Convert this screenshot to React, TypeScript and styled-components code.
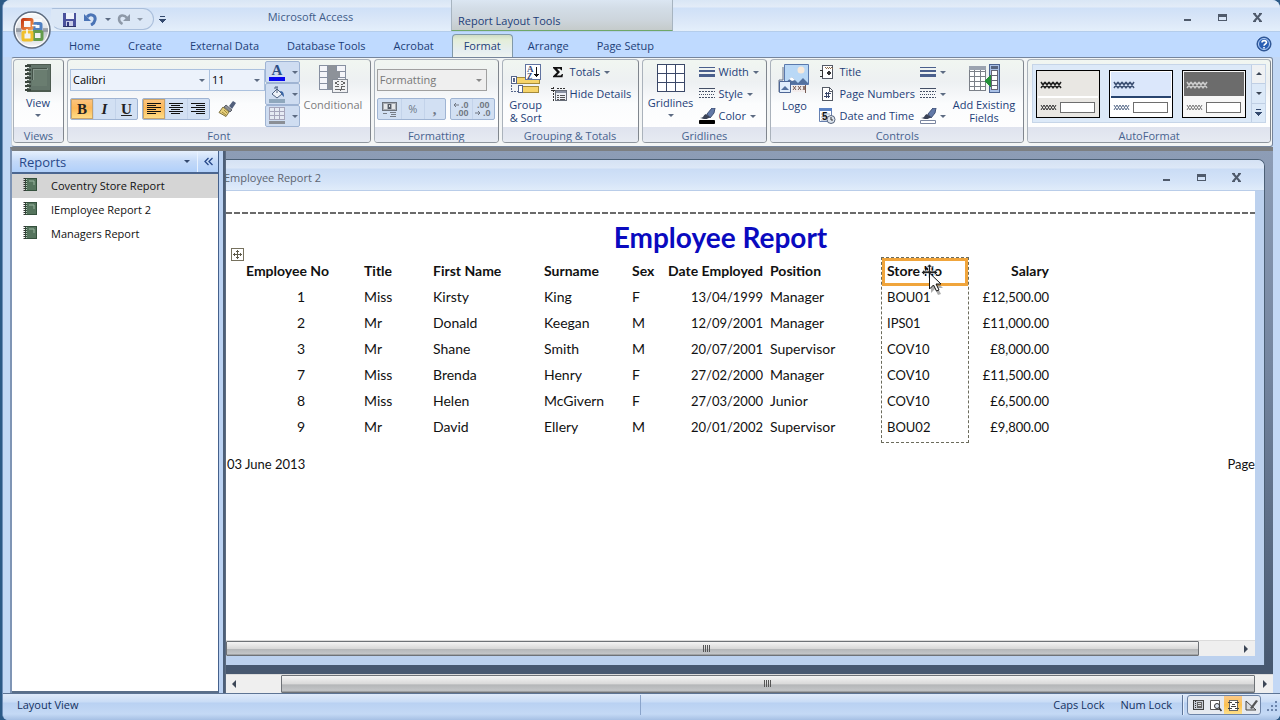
import React from "react";
import styled, { createGlobalStyle, css } from "styled-components";

const Global = createGlobalStyle`
  *, *::before, *::after { box-sizing: border-box; }
  body { margin: 0; background: #2c5a86; font-family: "Open Sans", "Noto Sans", sans-serif; font-size: 11px; line-height: 16px; color: #15428b; }
  button, input, select { font: inherit; color: inherit; margin: 0; padding: 0; border: 0; background: none; border-radius: 0; }
  button { cursor: default; }
  svg { display: block; flex: none; }
`;

const Shell = styled.div`
  display: flex; flex-direction: column; min-height: 100vh; margin-left: 2px; position: relative;
  background: #c3d8f5; border-left: 1px solid #6f8fb8; border-radius: 8px 8px 6px 6px; overflow: hidden;
`;

/* Title bar */
const TitleBar = styled.header`
  display: flex; height: 32px; border-bottom: 1px solid #b4cdec;
  background: linear-gradient(#d9e6f5 0, #e3ecf8 7px, #cfe0f7 8px, #dce8f8 22px, #e4effb 31px);
`;
const TitleStart = styled.div` display: flex; flex: none; width: 448px; padding: 8px 0 0 48px; `;
const QuickBar = styled.div`
  display: flex; align-items: center; gap: 6px; width: 103px; height: 22px; padding-left: 10px;
  border: 1px solid #a9bedb; border-left-color: transparent; border-radius: 2px 11px 11px 10px; background: #dbe7f6;
`;
const BarMore = styled.button` display: flex; align-items: center; width: 16px; height: 22px; padding-left: 5px; `;
const AppTitle = styled.h1` flex: 1; margin: 0; font-size: 11px; line-height: 18px; font-weight: 400; text-align: center; color: #3f5c88; `;
const ContextTitle = styled.div`
  width: 222px; padding: 12px 6px 0; color: #1d3e78; border: 1px solid #a7b4c0; border-width: 0 1px;
  border-bottom: 1px solid #6fa76a; line-height: 18px;
  background: linear-gradient(#dbe6f2 0, #d3dde7 8px, #cdd5dc 20px, #c4cac9 31px);
`;
const WindowButtons = styled.div` display: flex; margin-left: auto; align-items: center; gap: 18px; `;
const MainWindowButtons = styled(WindowButtons)` padding: 4px 14px 0 0; `;
const WinButton = styled.button` width: 17px; height: 17px; display: grid; place-items: center; `;
const OfficeButton = styled.button` position: absolute; left: 10px; top: 11px; width: 38px; height: 38px; z-index: 2; `;

/* Tabs */
const TabStrip = styled.nav` display: flex; height: 25px; padding-left: 52px; background: #bfdaff; `;
const Tab = styled.button<{ $on?: boolean }>`
  height: 25px; padding: 2px 14px 0; color: #1d3e78; white-space: nowrap;
  ${p => p.$on && css`
    background: linear-gradient(#cfdcc4 0, #e4eed9 5px, #e6eef1 16px, #f2f6ef 25px); border: 1px solid #8199a8;
    border-bottom: 0; border-radius: 4px 4px 0 0; padding: 0 11px; margin: 2px 1px 0 4px; height: 23px;
  `}
`;
const HelpButton = styled.button` margin: 3px 7px 0 auto; width: 18px; height: 18px; `;

/* Ribbon */
const Ribbon = styled.section`
  display: flex; gap: 3px; margin: 0 7px 0 8px; padding: 1px 1px 3px; border: 1px solid #75849b; border-left-color: #c5d1df;
  border-radius: 3px; background: #f3f5f5; height: 90px;
`;
const Group = styled.section<{ $w: number }>`
  flex: ${p => p.$w} 1 ${p => p.$w}px; min-width: 0; display: flex; flex-direction: column; overflow: hidden;
  border: 1px solid #aab2bb; border-right-color: #80868e; border-bottom-color: #8e959d; border-radius: 4px;
  background: linear-gradient(#f1f6f1 0, #edf0f2 22px, #fbfcfd 44px, #fff 100%);
`;
const GroupBody = styled.div` display: flex; flex: 1; min-height: 0; `;
const GroupLabel = styled.h2` margin: 0; height: 15px; line-height: 17px; font-size: 11px; font-weight: 400; text-align: center; color: #48638f; background: linear-gradient(#dfe3ee, #e6eaf2); `;
const BigButton = styled.button<{ $w: number; $muted?: boolean }>`
  width: ${p => p.$w}px; display: flex; flex-direction: column; align-items: center; justify-content: flex-start;
  padding-top: 4px; line-height: 13px; color: ${p => (p.$muted ? "#7d7d7d" : "#1d3e78")};
  & > svg:first-child { margin-bottom: 4px; }
`;
const Down = styled.i<{ $c?: string }>`
  flex: none; width: 0; height: 0; border: 3px solid transparent; border-top-color: ${p => p.$c || "#5c6b82"}; border-bottom: 0;
`;
const ArrowGap = styled.span` height: 12px; display: flex; align-items: center; `;
const Stack = styled.div<{ $ml?: number }>` display: flex; flex-direction: column; padding-top: 1px; margin-left: ${p => p.$ml || 0}px; `;
const SmallButton = styled.button` display: flex; align-items: center; gap: 4px; height: 22px; color: #1d3e78; white-space: nowrap; `;
const IconSlot = styled.span` width: 16px; height: 16px; display: grid; place-items: center; flex: none; `;
const ComboRow = styled.div` display: flex; `;
const Combo = styled.label<{ $w: number; $muted?: boolean }>`
  position: relative; width: ${p => p.$w}px; height: 22px; display: flex; align-items: center; border: 1px solid ${p => (p.$muted ? "#a0a0a0" : "#abc1de")};
  background: ${p => (p.$muted ? "#efefef" : "#ecf2fb")}; padding-right: 4px;
  & + & { border-left: 0; }
  select { appearance: none; flex: 1; min-width: 0; padding-left: 2px; color: ${p => (p.$muted ? "#777" : "#000")}; opacity: 1; }
  i { pointer-events: none; }
`;
const ButtonSet = styled.div` display: flex; height: 22px; border: 1px solid #9fb4d3; border-radius: 2px; background: #d2e0f3; overflow: hidden; `;
const SetButton = styled.button<{ $w: number; $on?: boolean; $muted?: boolean }>`
  width: ${p => p.$w}px; display: grid; place-items: center; color: ${p => (p.$muted ? "#707a88" : "#222")};
  & + & { border-left: 1px solid #c3d3ea; }
  ${p => p.$on && css` background: linear-gradient(#fbc583, #fdb757 45%, #fee08a); box-shadow: inset 0 0 0 1px #c9a36a; `}
`;
const Glyph = styled.span<{ $style: "b" | "i" | "u" | "s" }>`
  font-family: "Liberation Serif", serif; font-size: 15px; line-height: 18px; font-weight: 700;
  ${p => p.$style === "i" && "font-style: italic;"}
  ${p => p.$style === "u" && "text-decoration: underline;"}
`;
const Tools = styled.div` display: flex; gap: 4px; margin-top: 7px; align-items: center; `;
const FontColumn = styled.div` padding: 9px 0 0 2px; `;
const ColorStack = styled.div` display: flex; flex-direction: column; padding-top: 1px; width: 35px; `;
const ColorButton = styled.button`
  display: flex; align-items: center; gap: 6px; height: 22px; padding-left: 3px; border: 1px solid #9fb4d3; border-radius: 2px; background: #cfddf1;
`;
const LoneButton = styled.button` width: 26px; height: 22px; display: grid; place-items: center; `;
const Gallery = styled.div` display: flex; flex: 1; margin: 4px; border: 1px solid #c6d5e8; background: #dce9f8; `;
const Styles = styled.div` flex: 1; display: flex; align-items: center; justify-content: space-between; padding: 0 5px 0 3px; `;
const StyleButton = styled.button` width: 64px; height: 48px; `;
const Spinner = styled.div` width: 14px; display: flex; flex-direction: column; border-left: 1px solid #c0cfe4; `;
const SpinButton = styled.button`
  flex: 1; display: grid; place-items: center; & + & { border-top: 1px solid #c0cfe4; } &:first-child { background: #eff1f3; }
`;

/* Work area */
const Main = styled.main` flex: 1; display: flex; margin: 0 7px; border-top: 4px solid #7c7f82; border-left: 2px solid #7f95b5; min-height: 0; `;
const NavPane = styled.aside` flex: none; width: 207px; background: #fff; border-right: 1px solid #45618c; border-bottom: 2px solid #5b6f89; `;
const NavHead = styled.div` display: flex; align-items: center; height: 23px; border-bottom: 2px solid #4b6690; background: linear-gradient(#e6f0fd, #c3d9f8 50%, #b1d0fa); padding-left: 7px; `;
const NavTitle = styled.h2` flex: 1; margin: 0; font-size: 13px; line-height: 18px; font-weight: 400; color: #27488a; `;
const NavToggle = styled.button` width: 21px; height: 21px; display: grid; place-items: center; & + & { border-left: 1px solid #e8f2ff; } `;
const NavList = styled.ul` list-style: none; margin: 0; padding: 0; `;
const NavItem = styled.a<{ $on?: boolean }>`
  display: flex; align-items: center; gap: 14px; height: 24px; padding-left: 11px; color: #111; text-decoration: none;
  background: ${p => (p.$on ? "#d5d5d5" : "transparent")};
  svg { margin-bottom: 3px; }
`;
const Splitter = styled.div` flex: none; width: 6px; background: #bcd3f3; border-right: 2px solid #4d5f78; `;
const Workspace = styled.div` flex: 1; min-width: 0; display: flex; flex-direction: column; border-left: 1px solid #5c6b80; background: linear-gradient(#8d9db6 0, #74859f 40%, #475870 95%); `;
const Child = styled.section`
  flex: 1; display: flex; flex-direction: column; margin: 8px 8px 9px 0; border-top: 1px solid #4c6076; border-right: 1px solid #4c6076;
  border-radius: 0 7px 0 0; background: #bcd1ee; padding: 0 9px 9px 0;
`;
const ChildTitle = styled.div`
  display: flex; height: 31px; margin-right: -9px; padding: 5px 19px 0 0; align-items: center; border-radius: 0 6px 0 0; color: #5d6470; white-space: nowrap;
  background: linear-gradient(#d5e2f4 0, #dde8f7 8px, #cadcf5 9px, #d5e4f8 22px, #e0ecfa 30px);
  border-bottom: 1px solid #b9cde9;
`;
const ChildName = styled.h2` margin: 0 0 0 -2px; font: inherit; `;
const Report = styled.article` position: relative; flex: 1; background: #fff; color: #111; font-family: Lato, "Open Sans", sans-serif; font-size: 13px; line-height: 18px; overflow: hidden; `;
const PageEdge = styled.hr` margin: 21px 0 0; border: 0; height: 2px; background: repeating-linear-gradient(90deg, #6a6a6a 0 6px, transparent 6px 8px); `;
const ReportTitle = styled.h1` margin: 0; padding: 7px 0 0; height: 44px; width: 989px; max-width: 100%; text-align: center; font-size: 28px; line-height: 32px; color: #0a0abf; `;
const DataTable = styled.table` position: relative; border-collapse: collapse; table-layout: fixed; width: 827px; `;
type CellProps = { $right?: boolean; $pad?: number; $figures?: boolean };
const cell = css<CellProps>`
  height: 26px; padding: 0 ${p => (p.$right ? (p.$pad ?? 4) : 0)}px 0 ${p => (p.$right ? 0 : (p.$pad ?? 7))}px;
  text-align: ${p => (p.$right ? "right" : "left")}; white-space: nowrap; font-size: ${p => (p.$figures ? 13 : 14)}px;
`;
const Th = styled.th<CellProps>` ${cell} `;
const Td = styled.td<CellProps>` ${cell} `;
const SelectedTh = styled(Th)`
  position: relative;
  &::before { content: ""; position: absolute; left: 0; top: -1px; width: 88px; height: 186px; border: 1px dashed #6b6b5c; }
  &::after { content: ""; position: absolute; left: 1px; top: 0; width: 86px; height: 28px; border: 3px solid #f0a53c; }
`;
const MoveHandle = styled.button` position: absolute; left: 5px; top: -10px; width: 13px; height: 13px; `;
const Pointer = styled.svg` position: absolute; left: 38px; top: 6px; z-index: 1; `;
const ReportFoot = styled.footer` display: flex; justify-content: space-between; margin-top: 15px; padding-left: 1px; `;

const ScrollTrack = styled.div<{ $h: number }>` display: flex; height: ${p => p.$h}px; background: #efefef; border-top: 1px solid #dcdcdc; `;
const ScrollThumb = styled.div<{ $open?: boolean }>`
  flex: 1; display: grid; place-items: center; border: 1px solid #6e7277; border-radius: 1px; padding-right: ${p => (p.$open ? 12 : 0)}px;
  background: linear-gradient(#f4f4f4, #d9d9d9 50%, #b4b6b8 55%, #c3c5c7 90%, #8c8e90);
`;
const ScrollButton = styled.button<{ $w: number; $inset: number }>` width: ${p => p.$w}px; padding-left: ${p => p.$inset}px; display: flex; align-items: center; `;

/* Status bar */
const Status = styled.footer`
  display: flex; align-items: center; height: 27px; padding: 0 2px 4px 14px; color: #14315f; border-top: 1px solid #5d7494;
  background: linear-gradient(#dfeafa 0, #c9dcf6 8px, #b9d1f2 9px, #c4d9f5 20px, #a6c0e4 26px);
`;
const StatusHalf = styled.div` flex: 1; `;
const StatusEnd = styled.div` flex: none; width: calc(50% + 8px); display: flex; align-items: center; justify-content: flex-end; border-left: 1px solid #8aa4cb; `;
const LockText = styled.span` margin-right: 16px; &:nth-child(2) { margin-right: 10px; } `;
const ViewDivider = styled.span` width: 2px; height: 20px; margin-right: 3px; background: #5f7699; border-right: 1px solid #e3edfb; `;
const ViewSet = styled.div` display: flex; border: 1px solid #6e85a8; border-radius: 3px; background: #e6eaf0; height: 20px; overflow: hidden; margin-right: 1px; `;
const ViewButton = styled.button<{ $on?: boolean }>` width: 18px; display: grid; place-items: center; background: ${p => (p.$on ? "linear-gradient(#fbc98a, #fbc04f 50%, #fde08a)" : "transparent")}; `;

const px = { shapeRendering: "crispEdges" as const };

const MinIcon = () => <svg width="17" height="17" {...px}><path d="M5 10h7v2H5z" fill="#4f5a6b" /></svg>;
const MaxIcon = () => <svg width="17" height="17" {...px}><path d="M4.500 5.500h8v6h-8z" fill="none" stroke="#4f5a6b" /><path d="M4 5h9v3H4z" fill="#4f5a6b" /></svg>;
const CloseIcon = () => <svg width="17" height="17"><path d="M5 4.500l7 8M12 4.500l-7 8" stroke="#4f5a6b" strokeWidth="2" /><path d="M4 4.500h3M10 4.500h3M4 12.500h3M10 12.500h3" stroke="#4f5a6b" /></svg>;

const BookIcon = ({ s }: { s: number }) => (
  <svg width={s} height={s} viewBox="0 0 28 28">
    <rect x="3" y="0" width="24" height="28" fill="#4d5b50" />
    <rect x="4" y="1" width="22" height="25" fill="#63756a" />
    <path d="M8 5h15v17H8z" fill="#6a7d70" />
    <path d="M8 4h16v2H10v10H8z" fill="#86978c" />
    <path d="M8.500 4v12M8 4.500h15" stroke="#45544a" />
    <path d="M1 2h6M1 6h6M1 10h6M1 14h6M1 18h6M1 22h6M1 26h6" stroke="#39443c" strokeWidth="2" />
    <path d="M1 3.500h4M1 7.500h4M1 11.500h4M1 15.500h4M1 19.500h4M1 23.500h4" stroke="#e6eae7" />
  </svg>
);

const SmallBook = () => (
  <svg width="14" height="14" viewBox="0 0 14 14">
    <path d="M2 0h12v13H2z" fill="#35513d" /><path d="M4 1h9v11H4z" fill="#55745d" />
    <path d="M6 3h5v4" fill="none" stroke="#9ab5a0" /><path d="M1.500 0v14" stroke="#333" strokeWidth="2" strokeDasharray="1 1" />
    <path d="M3.500 1v12" stroke="#b8c9bc" strokeDasharray="1 1" />
  </svg>
);

const OfficeLogo = () => (
  <svg width="38" height="38" viewBox="0 0 38 38">
    <defs>
      <linearGradient id="orb" x1="0" y1="0" x2="0" y2="1"><stop offset="0" stopColor="#fbfcfd" /><stop offset=".46" stopColor="#dfe2e7" /><stop offset=".5" stopColor="#b9bfc8" /><stop offset="1" stopColor="#fbfbfc" /></linearGradient>
      <linearGradient id="flame" x1="0" y1="0" x2="1" y2="1"><stop offset="0" stopColor="#c53a14" /><stop offset="1" stopColor="#f0924a" /></linearGradient>
    </defs>
    <circle cx="19" cy="19" r="18" fill="url(#orb)" stroke="#5f6d80" strokeWidth="1.500" />
    <circle cx="19" cy="19" r="16.500" fill="none" stroke="#fff" />
    <path d="M3 17h5v4H3zM30 17h5v4h-5z" fill="#7d838c" opacity=".6" />
    <path d="M9 8h20v22H9z" fill="#fff" opacity=".7" />
    <g fill="none" strokeWidth="3">
      <rect x="21" y="12.500" width="7" height="6" rx="1" stroke="#4f7fc0" />
      <rect x="20.500" y="20.500" width="8.500" height="8" rx="1" stroke="#639b4c" />
      <rect x="10" y="21" width="9" height="8" rx="1" stroke="#f0c02c" />
      <rect x="9.500" y="8.500" width="9.500" height="9" rx="1" stroke="url(#flame)" />
    </g>
    <path d="M19 14.500h5M14 18v5" stroke="#fff" strokeWidth="1.500" />
  </svg>
);

const SaveIcon = () => (
  <svg width="15" height="15" {...px}><path d="M1 1h13v13H1z" fill="#4a519c" /><path d="M4 1h8v6H4z" fill="#eef2fb" /><path d="M4 9h7v5H4z" fill="#c9cde8" /><path d="M5 10h2v4H5z" fill="#343a80" /><path d="M1 14h13v1H1z" fill="#2e3468" /></svg>
);
const UndoIcon = () => (
  <svg width="16" height="14"><path d="M4 5C7 1 13 3 12 8c-.5 2.500-2 4-4 5" fill="none" stroke="#4b74b6" strokeWidth="3" /><path d="M1 2v7h7z" fill="#4b74b6" /></svg>
);
const RedoIcon = () => (
  <svg width="14" height="14"><path d="M10 6C7 2 2 3 2 7c0 2.500 1.500 4 3.500 5" fill="none" stroke="#8e99a8" strokeWidth="2.500" /><path d="M13 2v7H6z" fill="#8e99a8" /></svg>
);
const MoreIcon = () => <svg width="7" height="7" {...px}><path d="M1 0h5v1H1zM0 3h7v1H6v1H5v1H4v1H3V6H2V5H1V4H0z" fill="#33496e" /></svg>;

const HelpIcon = () => (
  <svg width="18" height="18"><circle cx="9" cy="9" r="7" fill="#2b5fb4" stroke="#274b86" /><circle cx="9" cy="9" r="5.500" fill="none" stroke="#b9d2f5" /><path d="M7 7.500c0-2.500 4.500-2.500 4.500 0 0 1.500-2.500 1.500-2.500 3.200M9 12v1.500" fill="none" stroke="#fff" strokeWidth="1.600" /></svg>
);

const AlignIcon = ({ k }: { k: 0 | 1 | 2 }) => (
  <svg width="14" height="12" {...px}>
    {[0, 1, 2, 3, 4, 5].map(i => {
      const w = i % 2 ? 9 : 14;
      return <rect key={i} x={k === 0 ? 0 : k === 1 ? (14 - w) >> 1 : 14 - w} y={i * 2} width={w} height="1" fill="#111" />;
    })}
  </svg>
);

const BrushIcon = () => (
  <svg width="18" height="16"><path d="M11 5l4-5 3 2-4 6z" fill="#52607c" /><path d="M8 4l6 5-2 2-6-5z" fill="#8b8f96" stroke="#5d626b" /><path d="M5 6l6 5-3 4.500-7-4z" fill="#e6cf7a" stroke="#7d7141" /><path d="M4 11l4 3M6 9l3 3" stroke="#a08a3c" /></svg>
);
const FontColorIcon = () => (
  <svg width="17" height="18"><path d="M0 14h16v4H0z" fill="#0909ee" /><text x="8" y="12" fontFamily="Liberation Serif" fontSize="15" fontWeight="700" textAnchor="middle" fill="#2e4f85">A</text></svg>
);
const FillIcon = () => (
  <svg width="17" height="17"><path d="M0 13h16v4H0z" fill="#8fa8bd" /><path d="M3 8l5-5 5 5-5 4z" fill="#eef2f8" stroke="#4d6180" /><path d="M8 1v6M6 3V1h3" stroke="#4d6180" fill="none" /><path d="M11 5c3 0 4 2 4 6-2-1-2-3-3-4z" fill="#3a66a7" /></svg>
);
const LinesIcon = () => (
  <svg width="17" height="18" {...px}><path d="M.5.500h15v12H.5zM.5 4.500h15M.5 8.500h15M5.500.500v12M10.500.500v12" fill="#e6ebf3" stroke="#a6a6bb" /><path d="M0 14h16v3H0z" fill="#8b8f96" /></svg>
);
const ConditionalIcon = () => (
  <svg width="32" height="30" {...px}>
    <path d="M2.500 1.500h26v24h-26zM2.500 7.500h26M2.500 13.500h26M2.500 19.500h26M10.500 1.500v24M19.500 1.500v24" fill="#f4f5f9" stroke="#8790a1" />
    <path d="M11 1h8v6h-8zM19 7h4v6h-4zM11 7h8v6h-8zM11 13h10v6H11zM11 19h5v6h-5z" fill="#8d9299" />
    <path d="M15.500 15.500h15v13h-15z" fill="#f0f1f3" stroke="#858b95" />
    <path d="M22 17l-4 2 4 2M18 22.500h4M24 17l4 2-4 2M24 22.500h4M18 25.500h10M25 23l-2 4" fill="none" stroke="#666" />
  </svg>
);
const CurrencyIcon = () => (
  <svg width="17" height="17" {...px}><path d="M1.500 1.500h14v8h-14z" fill="#a9adb4" stroke="#6d737c" /><path d="M3 3h3v5H3zM11 3h3v5h-3z" fill="#e6e8ea" /><path d="M7 3h3v5H7z" fill="#555c67" /><path d="M8 4h1v2H8z" fill="#ddd" /><path d="M2 12.500h4M9 11.500h6M10 13.500h5M9 15.500h6" stroke="#777d86" /></svg>
);
const DecimalIcon = ({ up }: { up?: boolean }) => (
  <svg width="18" height="16" fill="#707782" fontFamily="Liberation Sans" fontSize="9" fontWeight="700">
    {up ? <><path d="M7 4H2M4 2L2 4l2 2" stroke="#707782" fill="none" /><text x="9" y="7">.0</text><text x="4" y="15">.00</text></>
      : <><text x="3" y="7">.00</text><path d="M1 12h5M4 10l2 2-2 2" stroke="#707782" fill="none" /><text x="9" y="15">.0</text></>}
  </svg>
);
const GroupSortIcon = () => (
  <svg width="32" height="30" {...px}>
    <path d="M1.500 13.500h28v6h-28z" fill="#f6d46a" stroke="#a48a3a" /><path d="M1.500 12.500h5v7h-5z" fill="#fff" stroke="#56658a" /><path d="M3 14h2v4H3z" fill="#56658a" />
    <path d="M8.500 22.500h20v6h-20z" fill="#f6d46a" stroke="#a48a3a" /><path d="M8.500 21.500h4v7h-4z" fill="#fff" stroke="#56658a" /><path d="M1.500 21v6.500h6" fill="none" stroke="#56658a" strokeDasharray="2 1" />
    <path d="M15.500.500h15v15h-15z" fill="#fff" stroke="#6073a0" />
    <text x="17" y="8" fontSize="9" fontFamily="Liberation Serif" fontWeight="700" fill="#34456f">A</text><text x="17" y="15" fontSize="8" fontFamily="Liberation Serif" fontWeight="700" fill="#34456f">Z</text>
    <path d="M26 3h1v10h-1zM24 10h5v1h-1v1h-3v-1h-1z" fill="#111" />
  </svg>
);
const SigmaIcon = () => <svg width="16" height="16"><path d="M3 3h9v3.200h-1L10 4.800H7L10 8l-3.300 3.500h4L12 10h1l-.5 3.300H3v-1L7 8.200 3 4z" fill="#111" /></svg>;
const DetailsIcon = () => (
  <svg width="18" height="16" {...px}><path d="M1 4h4M3 1v14M1 2h2M7 2h9" stroke="#333" strokeDasharray="2 1" /><path d="M5.500 4.500h11v10h-11z" fill="#edf0f5" stroke="#676d78" /><path d="M6 5h10v2H6z" fill="#8a92a3" /><path d="M7 9h2M10 9h5M7 11h2M10 11h5M7 13h2M10 13h5" stroke="#555" /></svg>
);
const GridIcon = () => <svg width="28" height="28" {...px}><path d="M.5.500h27v27H.5zM9.500 0v28M18.500 0v28M0 9.500h28M0 18.500h28" fill="#fff" stroke="#3b4868" /></svg>;
const WidthIcon = () => <svg width="16" height="12" {...px}><path d="M0 1h16v1H0zM0 4h16v2H0zM0 8h16v3H0z" fill="#4a5f8c" /></svg>;
const StyleIcon = () => <svg width="16" height="12" {...px}><path d="M0 .5h16" stroke="#444f66" /><path d="M0 3.500h16M0 9.500h16" stroke="#444f66" strokeDasharray="2 1" /><path d="M0 6.500h16" stroke="#444f66" strokeDasharray="1 1" /></svg>;
const PenIcon = ({ fill }: { fill: string }) => (
  <svg width="17" height="16"><path d="M8 6l5-6h3l-1 5-4 5z" fill="#6279a8" stroke="#3f5076" /><path d="M1 10c4 0 3-3 6-4l4 3c-3 3-6 2-10 1z" fill="#3a4256" /><path d="M.5 12.500h15v3H.5z" fill={fill} stroke={fill === "#fff" ? "#7a86a0" : fill} /></svg>
);
const LogoIcon = () => (
  <svg width="32" height="31"><path d="M6.500.500h24v20h-24z" fill="#b9d8f6" stroke="#5a79ad" /><circle cx="23" cy="6" r="3.500" fill="#f8e9da" /><path d="M7 19l7-6 6 6 5-5 5 5v1H7z" fill="#54719f" /><path d="M11 15l3-2 3 3-3 1z" fill="#fff" />
    <path d="M5 3v13H1v12" stroke="#66728a" fill="none" /><path d="M1.500 17.500h11v11h-11z" fill="#e2eefc" stroke="#4d6695" /><path d="M3 26l4-4 4 4z" fill="#54719f" /><path d="M14 21h14v7H14z" fill="#f3eded" /><path d="M15 22l3 4m0-4l-3 4m5-4l3 4m0-4l-3 4m5-4l2 4m0-4l-2 4M27.500 21v8" stroke="#775a52" /></svg>
);
const TitleIcon = () => <svg width="14" height="15" {...px}><path d="M2.500.500h10v13h-10z" fill="#fff" stroke="#555b66" /><path d="M5 2.500h7M6 3.500h7" stroke="#8c6c48" strokeDasharray="1 1" /><path d="M0 5.500h3M2.500 6v5H0M8 6h1v1h1v1H9v1H8V8H7V7h1z" stroke="#333" fill="none" /></svg>;
const PageIcon = () => <svg width="13" height="15" {...px}><path d="M1.500.500h7l3 3v10h-10z" fill="#fff" stroke="#555b66" /><path d="M8 1v3h3" stroke="#555b66" fill="none" /><path d="M5.500 5v6M7.500 5v6M4 6.500h6M3 9.500h6" stroke="#39466a" /></svg>;
const DateIcon = () => (
  <svg width="17" height="16"><path d="M.5.500h12v13H.5z" fill="#fff" stroke="#6680b0" /><path d="M0 0h13v3H0z" fill="#5b82c4" /><path d="M2 6h9M2 9h9M2 12h9" stroke="#9aa7bf" /><text x="3" y="12" fontSize="10" fontFamily="Liberation Sans" fontWeight="700" fill="#111">5</text><circle cx="12" cy="11.500" r="4" fill="#dce4ee" stroke="#56647c" /><path d="M12 9v3h2" stroke="#333" fill="none" /></svg>
);
const FieldsIcon = () => (
  <svg width="32" height="30" {...px}><path d="M1.500 2.500h16v24h-16zM1.500 7.500h16M1.500 12.500h16M1.500 17.500h16M1.500 22.500h16M6.500 2.500v24M12.500 2.500v24" fill="#fff" stroke="#7b8088" /><path d="M1 2h17v4H1z" fill="#9ba3af" /><path d="M21.500.500h10v28h-10z" fill="#a9c0e6" stroke="#4c6491" /><path d="M23.500 6.500h6v19h-6zM23.500 11.500h6M23.500 16.500h6M23.500 21.500h6" fill="#fff" stroke="#667" /><path d="M23 2h7v3h-7z" fill="#55647f" /><path d="M16 17l7-6v12z" fill="#249139" /></svg>
);

const crosses = (x: number, y: number, n: number, w: number, h: number) =>
  Array.from({ length: n }, (_, i) => `M${x + i * w} ${y}l${w} ${h}M${x + (i + 1) * w} ${y}l${-w} ${h}`).join("");

const FormatThumb = ({ top, rule, mark, low, bg }: { top: string; rule: string; mark: string; low: string; bg: string }) => (
  <svg width="64" height="48" {...px}>
    <path d="M.5.500h63v47H.5z" fill={bg} stroke="#000" />
    <path d="M2 2h60v24H2z" fill={top} /><path d="M2 26h60v2H2z" fill={rule} />
    <g shapeRendering="auto" fill="none">
      <path d={crosses(5, 12, 5, 4, 6)} stroke={mark} strokeWidth="1.500" />
      <path d={crosses(5, 35, 5, 3, 5)} stroke={low} />
    </g>
    <path d="M24.500 32.500h34v10h-34z" fill="#fff" stroke="#6e6e6e" />
  </svg>
);

const Tri = ({ dir }: { dir: "l" | "r" | "u" | "d" }) => {
  const d = { l: "M6 0v8L2 4z", r: "M2 0v8l4-4z", u: "M1 5h6L4 2z", d: "M1 3h6L4 6z" }[dir];
  return <svg width="8" height="8"><path d={d} fill="#3c4656" /></svg>;
};
const Grip = () => <svg width="8" height="8" {...px}><path d="M0 0h1v7H0zM2 0h1v7H2zM4 0h1v7H4zM6 0h1v7H6z" fill="#555" /></svg>;

const Choice = ({ w, label, name, muted }: { w: number; label: string; name: string; muted?: boolean }) => (
  <Combo $w={w} $muted={muted}>
    <select aria-label={name} disabled={muted}><option>{label}</option></select>
    <Down $c={muted ? "#888" : undefined} />
  </Combo>
);

const employees = [
  ["1", "Miss", "Kirsty", "King", "F", "13/04/1999", "Manager", "BOU01", "£12,500.00"],
  ["2", "Mr", "Donald", "Keegan", "M", "12/09/2001", "Manager", "IPS01", "£11,000.00"],
  ["3", "Mr", "Shane", "Smith", "M", "20/07/2001", "Supervisor", "COV10", "£8,000.00"],
  ["7", "Miss", "Brenda", "Henry", "F", "27/02/2000", "Manager", "COV10", "£11,500.00"],
  ["8", "Miss", "Helen", "McGivern", "F", "27/03/2000", "Junior", "COV10", "£6,500.00"],
  ["9", "Mr", "David", "Ellery", "M", "20/01/2002", "Supervisor", "BOU02", "£9,800.00"],
];
const widths = [131, 69, 111, 88, 37, 101, 118, 87, 85];
const isRight = (i: number) => i === 0 || i === 5 || i === 8;
const isFigures = (i: number) => i === 5 || i >= 7;
const padOf = (i: number) => (i === 0 ? 52 : i === 5 ? 0 : i === 8 ? 4 : i === 7 ? 6 : 7);

const PenRow = ({ fill, label }: { fill: string; label?: string }) => (
  <SmallButton aria-label={label || "Line color"}><IconSlot><PenIcon fill={fill} /></IconSlot>{label}<Down /></SmallButton>
);

export default function App() {
  return (
    <Shell>
      <Global />
      <OfficeButton aria-label="Office menu"><OfficeLogo /></OfficeButton>
      <TitleBar>
        <TitleStart>
          <QuickBar>
            <button aria-label="Save"><SaveIcon /></button>
            <button aria-label="Undo"><UndoIcon /></button><Down />
            <button aria-label="Redo"><RedoIcon /></button><Down $c="#8e99a8" />
          </QuickBar>
          <BarMore aria-label="Customize"><MoreIcon /></BarMore>
          <AppTitle>Microsoft Access</AppTitle>
        </TitleStart>
        <ContextTitle>Report Layout Tools</ContextTitle>
        <MainWindowButtons>
          <WinButton aria-label="Minimize"><MinIcon /></WinButton>
          <WinButton aria-label="Restore"><MaxIcon /></WinButton>
          <WinButton aria-label="Close"><CloseIcon /></WinButton>
        </MainWindowButtons>
      </TitleBar>
      <TabStrip>
        {["Home", "Create", "External Data", "Database Tools", "Acrobat", "Format", "Arrange", "Page Setup"].map(t => (
          <Tab key={t} $on={t === "Format"}>{t}</Tab>
        ))}
        <HelpButton aria-label="Help"><HelpIcon /></HelpButton>
      </TabStrip>

      <Ribbon>
        <Group $w={51}>
          <GroupBody><BigButton $w={48}><BookIcon s={28} /><span>View</span><ArrowGap><Down /></ArrowGap></BigButton></GroupBody>
          <GroupLabel>Views</GroupLabel>
        </Group>
        <Group $w={304}>
          <GroupBody>
            <FontColumn>
              <ComboRow><Choice w={140} name="Font" label="Calibri" /><Choice w={55} name="Font size" label="11" /></ComboRow>
              <Tools>
                <ButtonSet>
                  <SetButton $w={22} $on aria-label="Bold"><Glyph $style="b">B</Glyph></SetButton>
                  <SetButton $w={22} aria-label="Italic"><Glyph $style="i">I</Glyph></SetButton>
                  <SetButton $w={22} aria-label="Underline"><Glyph $style="u">U</Glyph></SetButton>
                </ButtonSet>
                <ButtonSet>
                  <SetButton $w={22} $on aria-label="Align left"><AlignIcon k={0} /></SetButton>
                  <SetButton $w={22} aria-label="Center"><AlignIcon k={1} /></SetButton>
                  <SetButton $w={22} aria-label="Align right"><AlignIcon k={2} /></SetButton>
                </ButtonSet>
                <LoneButton aria-label="Format painter"><BrushIcon /></LoneButton>
              </Tools>
            </FontColumn>
            <ColorStack>
              <ColorButton aria-label="Font color"><FontColorIcon /><Down /></ColorButton>
              <ColorButton aria-label="Fill color"><FillIcon /><Down /></ColorButton>
              <ColorButton aria-label="Alternate fill"><LinesIcon /><Down /></ColorButton>
            </ColorStack>
            <BigButton $w={66} $muted><ConditionalIcon /><span>Conditional</span></BigButton>
          </GroupBody>
          <GroupLabel>Font</GroupLabel>
        </Group>
        <Group $w={125}>
          <GroupBody>
            <FontColumn>
              <Choice w={110} name="Number format" label="Formatting" muted />
              <Tools>
                <ButtonSet>
                  <SetButton $w={23} $muted aria-label="Currency"><CurrencyIcon /></SetButton>
                  <SetButton $w={23} $muted>%</SetButton>
                  <SetButton $w={21} $muted aria-label="Comma"><Glyph $style="s">,</Glyph></SetButton>
                </ButtonSet>
                <ButtonSet>
                  <SetButton $w={21} aria-label="Increase decimals"><DecimalIcon up /></SetButton>
                  <SetButton $w={22} aria-label="Decrease decimals"><DecimalIcon /></SetButton>
                </ButtonSet>
              </Tools>
            </FontColumn>
          </GroupBody>
          <GroupLabel>Formatting</GroupLabel>
        </Group>
        <Group $w={137}>
          <GroupBody>
            <BigButton $w={46}><GroupSortIcon /><span>Group<br />&amp; Sort</span></BigButton>
            <Stack $ml={1}>
              <SmallButton><IconSlot><SigmaIcon /></IconSlot>Totals <Down /></SmallButton>
              <SmallButton><IconSlot><DetailsIcon /></IconSlot>Hide Details</SmallButton>
            </Stack>
          </GroupBody>
          <GroupLabel>Grouping &amp; Totals</GroupLabel>
        </Group>
        <Group $w={126}>
          <GroupBody>
            <BigButton $w={56}><GridIcon /><span>Gridlines</span><ArrowGap><Down /></ArrowGap></BigButton>
            <Stack>
              <SmallButton><IconSlot><WidthIcon /></IconSlot>Width <Down /></SmallButton>
              <SmallButton><IconSlot><StyleIcon /></IconSlot>Style <Down /></SmallButton>
              <PenRow fill="#000" label="Color" />
            </Stack>
          </GroupBody>
          <GroupLabel>Gridlines</GroupLabel>
        </Group>
        <Group $w={254}>
          <GroupBody>
            <BigButton $w={46}><LogoIcon /><span>Logo</span></BigButton>
            <Stack $ml={2}>
              <SmallButton><IconSlot><TitleIcon /></IconSlot>Title</SmallButton>
              <SmallButton><IconSlot><PageIcon /></IconSlot>Page Numbers</SmallButton>
              <SmallButton><IconSlot><DateIcon /></IconSlot>Date and Time</SmallButton>
            </Stack>
            <Stack $ml={5}>
              <SmallButton aria-label="Line thickness"><IconSlot><WidthIcon /></IconSlot><Down /></SmallButton>
              <SmallButton aria-label="Line type"><IconSlot><StyleIcon /></IconSlot><Down /></SmallButton>
              <PenRow fill="#fff" />
            </Stack>
            <BigButton $w={76}><FieldsIcon /><span>Add Existing<br />Fields</span></BigButton>
          </GroupBody>
          <GroupLabel>Controls</GroupLabel>
        </Group>
        <Group $w={244}>
          <GroupBody>
            <Gallery>
              <Styles>
                <StyleButton aria-label="Access 2003"><FormatThumb bg="#e9e7e3" top="#e9e7e3" rule="#fff" mark="#222" low="#333" /></StyleButton>
                <StyleButton aria-label="Access 2007"><FormatThumb bg="#fff" top="#dbe7fb" rule="#28446f" mark="#3e5275" low="#5b6d8c" /></StyleButton>
                <StyleButton aria-label="Apex"><FormatThumb bg="#f7f7f7" top="#6c6c6c" rule="#f7f7f7" mark="#c9c9c9" low="#777" /></StyleButton>
              </Styles>
              <Spinner>
                <SpinButton aria-label="Previous"><Tri dir="u" /></SpinButton>
                <SpinButton aria-label="Next"><Tri dir="d" /></SpinButton>
                <SpinButton aria-label="More"><MoreIcon /></SpinButton>
              </Spinner>
            </Gallery>
          </GroupBody>
          <GroupLabel>AutoFormat</GroupLabel>
        </Group>
      </Ribbon>

      <Main>
        <NavPane>
          <NavHead>
            <NavTitle>Reports</NavTitle>
            <NavToggle aria-label="Filter"><Down $c="#33496e" /></NavToggle>
            <NavToggle aria-label="Collapse"><svg width="9" height="9"><path d="M4.500 1L1 4.500 4.500 8M8.500 1L5 4.500 8.500 8" fill="none" stroke="#27488a" strokeWidth="1.300" /></svg></NavToggle>
          </NavHead>
          <NavList>
            {["Coventry Store Report", "IEmployee Report 2", "Managers Report"].map((n, i) => (
              <li key={n}><NavItem href="#" $on={i === 0}><SmallBook />{n}</NavItem></li>
            ))}
          </NavList>
        </NavPane>
        <Splitter />
        <Workspace>
          <Child>
            <ChildTitle>
              <ChildName>Employee Report 2</ChildName>
              <WindowButtons>
                <WinButton aria-label="Minimize report"><MinIcon /></WinButton>
                <WinButton aria-label="Restore report"><MaxIcon /></WinButton>
                <WinButton aria-label="Close report"><CloseIcon /></WinButton>
              </WindowButtons>
            </ChildTitle>
            <Report>
              <PageEdge />
              <ReportTitle>Employee Report</ReportTitle>
              <DataTable>
                <colgroup>{widths.map((w, i) => <col key={i} style={{ width: w }} />)}</colgroup>
                <thead>
                  <tr>
                    <Th $pad={20}>
                      <MoveHandle aria-label="Move table"><svg width="13" height="13" {...px}><path d="M.5.500h12v12H.5z" fill="#fff" stroke="#76715e" /><path d="M6 2h1v9H6zM2 6h9v1H2zM5 3h3v1H5zM5 9h3v1H5zM3 5h1v3H3zM9 5h1v3H9z" fill="#5f5b4b" /></svg></MoveHandle>
                      Employee No
                    </Th>
                    <Th>Title</Th><Th>First Name</Th><Th>Surname</Th><Th>Sex</Th>
                    <Th $right $pad={0}>Date Employed</Th>
                    <Th>Position</Th>
                    <SelectedTh $pad={6}>
                      Store No
                      <Pointer width="26" height="32">
                        <path d="M10.500 0l3 3h-2v4h4V5l3 3.500-3 3v-2h-4v4h-2v-4h-4v2l-3-3 3-3.500v2h4V3h-2z" fill="#222" stroke="#fff" strokeWidth=".7" />
                        <path d="M12 12v17l4-4 3 6 3-1-3-6h5z" fill="#777" opacity=".6" />
                        <path d="M10.500 9v16l4-4 3 6 2.500-1-3-6h5z" fill="#fff" stroke="#111" />
                      </Pointer>
                    </SelectedTh>
                    <Th $right>Salary</Th>
                  </tr>
                </thead>
                <tbody>
                  {employees.map(r => (
                    <tr key={r[0]}>{r.map((v, i) => <Td key={i} $right={isRight(i)} $pad={padOf(i)} $figures={isFigures(i)}>{v}</Td>)}</tr>
                  ))}
                </tbody>
              </DataTable>
              <ReportFoot><span>03 June 2013</span><span>Page</span></ReportFoot>
            </Report>
            <ScrollTrack $h={16}>
              <ScrollThumb $open><Grip /></ScrollThumb>
              <ScrollButton $w={56} $inset={43} aria-label="Scroll right"><Tri dir="r" /></ScrollButton>
            </ScrollTrack>
          </Child>
          <ScrollTrack $h={19}>
            <ScrollButton $w={55} $inset={4} aria-label="Scroll left"><Tri dir="l" /></ScrollButton>
            <ScrollThumb><Grip /></ScrollThumb>
            <ScrollButton $w={18} $inset={6} aria-label="Scroll right"><Tri dir="r" /></ScrollButton>
          </ScrollTrack>
        </Workspace>
      </Main>

      <Status>
        <StatusHalf>Layout View</StatusHalf>
        <StatusEnd>
          <LockText>Caps Lock</LockText><LockText>Num Lock</LockText>
          <ViewDivider />
          <ViewSet>
            <ViewButton aria-label="Report view"><svg width="13" height="13" {...px}><path d="M2.500 1.500h10v9h-10z" fill="#c8cdd5" stroke="#444" /><path d="M6 3h5v6H6z" fill="#666" /><path d="M7 4h3v1H7zM7 6h3v1H7z" fill="#ddd" /><path d="M2 1v10M4.500 2v8" stroke="#333" strokeDasharray="1 1" /></svg></ViewButton>
            <ViewButton aria-label="Print preview"><svg width="13" height="13"><path d="M1.500 1.500h9v9h-9z" fill="#fff" stroke="#555" /><circle cx="8" cy="7" r="2.500" fill="#dce6f2" stroke="#333" /><path d="M10 9l2.500 3" stroke="#333" strokeWidth="1.600" /></svg></ViewButton>
            <ViewButton $on aria-label="Layout view"><svg width="13" height="13" {...px}><path d="M2.500 1.500h8v10h-8z" fill="#fff" stroke="#666" /><path d="M1 3.500h4M8 3.500h4M5 5.500h3M4 7.500h5M1 9.500h4M8 9.500h4" stroke="#444" /></svg></ViewButton>
            <ViewButton aria-label="Design view"><svg width="13" height="13"><path d="M1 2l10 9H1z" fill="#d5d9df" stroke="#444" /><path d="M5 9l6-8 2 1-6 8z" fill="#555" /></svg></ViewButton>
          </ViewSet>
          <svg width="16" height="20" {...px}><path d="M13 6h2v2h-2zM9 10h2v2H9zM13 10h2v2h-2zM5 14h2v2H5zM9 14h2v2H9zM13 14h2v2h-2z" fill="#6c84ab" /></svg>
        </StatusEnd>
      </Status>
    </Shell>
  );
}
